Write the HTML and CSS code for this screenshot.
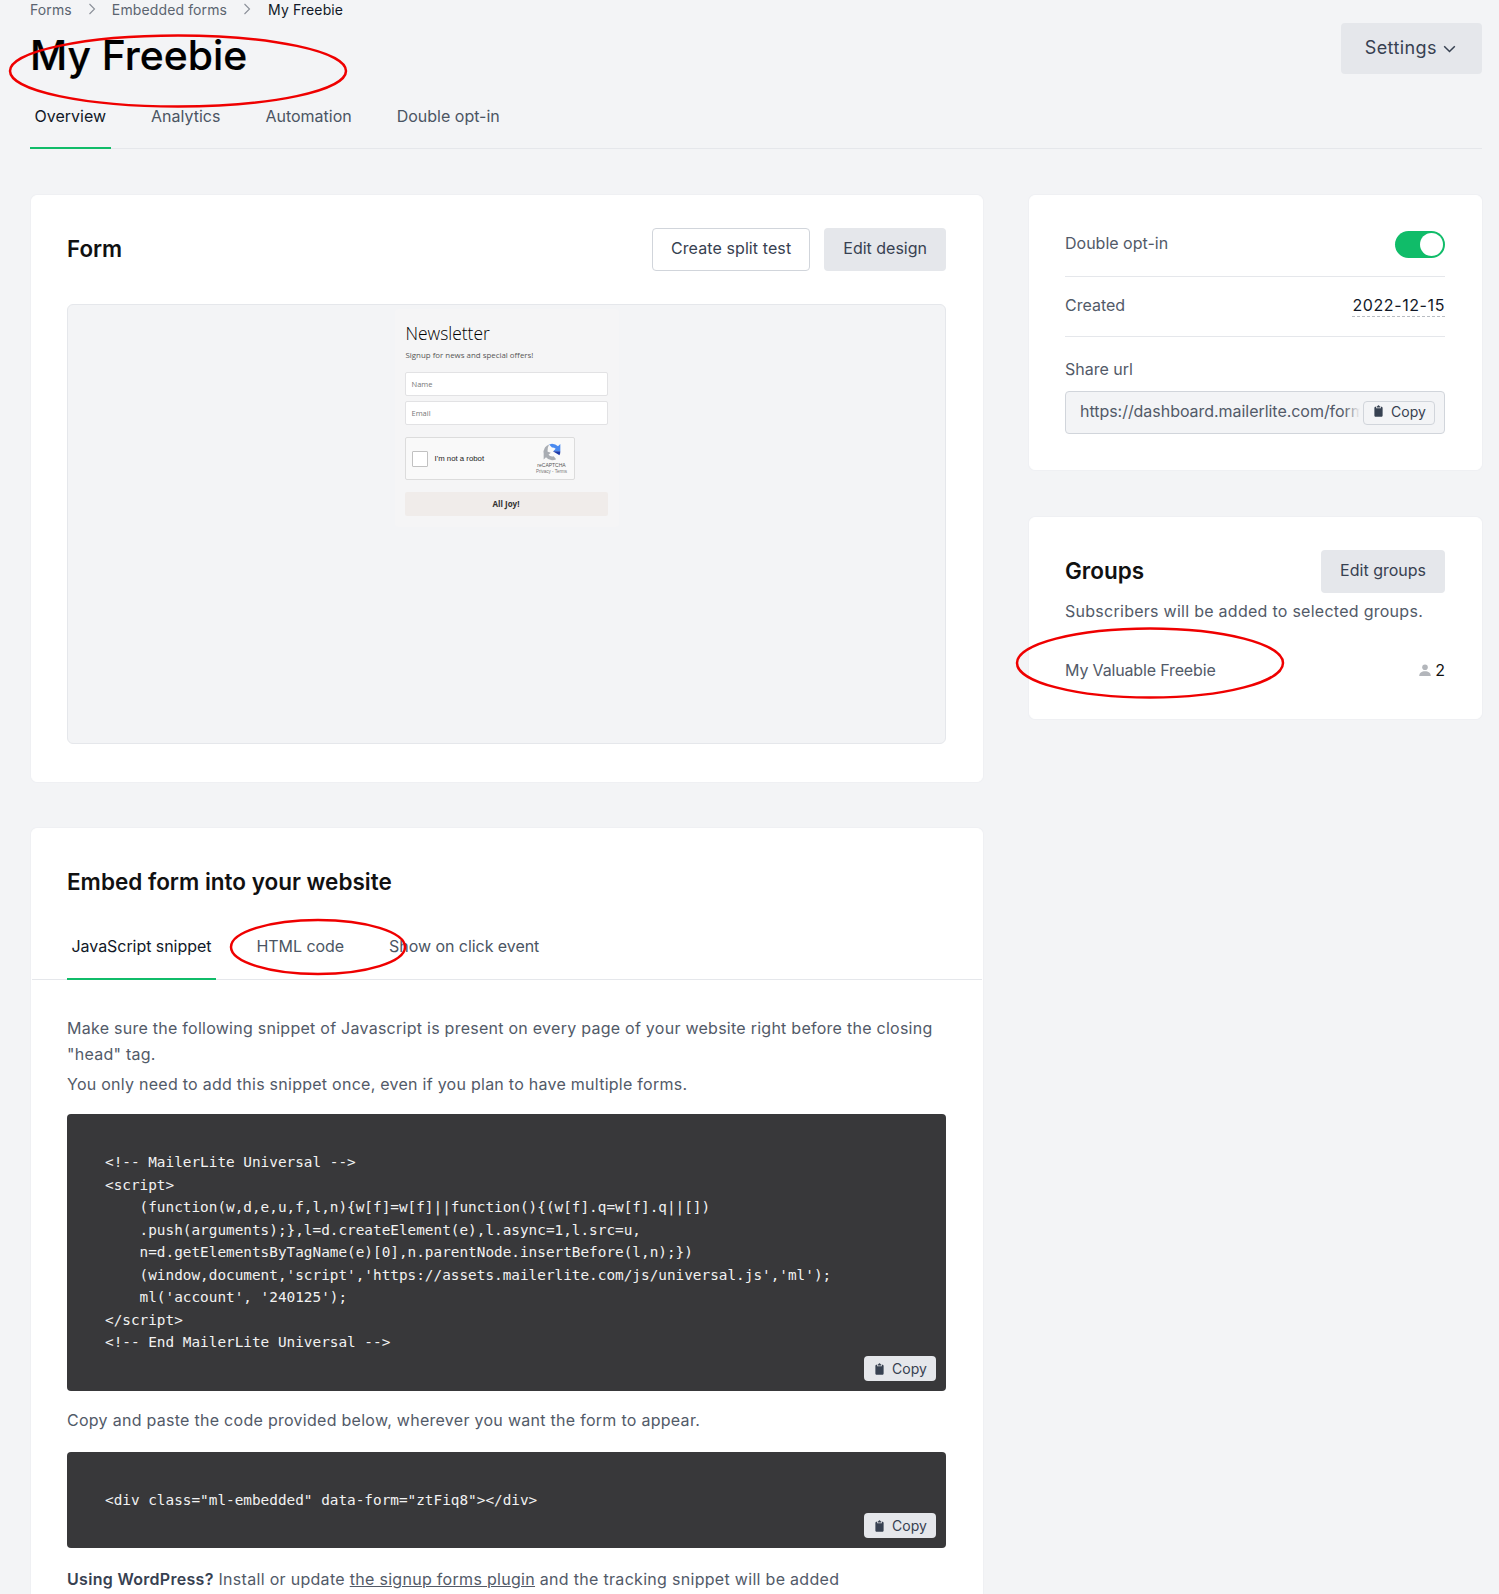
FILE: index.html
```html
<!DOCTYPE html>
<html lang="en">
<head>
<meta charset="utf-8">
<title>My Freebie</title>
<link rel="stylesheet" href="styles.css">
</head>
<body>
<svg width="0" height="0" class="defs">
  <symbol id="clip" viewBox="1 0 10 14"><path d="M4 1.600h.9C5 .8 5.400.3 6 .3s1 .5 1.100 1.300H8V3H4zM2.800 2h.4v1.800h5.600V2h.4c.9 0 1.600.6 1.600 1.500v8.800c0 .9-.7 1.500-1.600 1.500H2.800c-.9 0-1.600-.6-1.600-1.500V3.500C1.200 2.600 1.900 2 2.800 2z" fill="currentColor"/></symbol>
</svg>
<div class="page">
  <nav class="crumbs">
    <span>Forms</span>
    <svg class="sep" viewBox="0 0 8 12"><path d="M1.500 1l5 5-5 5" fill="none" stroke="#8a8f98" stroke-width="1.100"/></svg>
    <span>Embedded forms</span>
    <svg class="sep" viewBox="0 0 8 12"><path d="M1.500 1l5 5-5 5" fill="none" stroke="#8a8f98" stroke-width="1.100"/></svg>
    <span class="cur">My Freebie</span>
  </nav>
  <header class="head">
    <h1>My Freebie</h1>
    <button class="btn gray settings">Settings <svg class="chev" viewBox="0 0 12 8"><path d="M.7 1.200L6 6.500l5.300-5.300" fill="none" stroke="#374151" stroke-width="1.500"/></svg></button>
  </header>
  <div class="tabs main-tabs">
    <a class="tab active">Overview</a>
    <a class="tab">Analytics</a>
    <a class="tab">Automation</a>
    <a class="tab">Double opt-in</a>
  </div>

  <div class="grid">
    <div class="col">
      <section class="card form-card">
        <div class="card-head">
          <h2>Form</h2>
          <div class="actions">
            <button class="btn outline">Create split test</button>
            <button class="btn gray">Edit design</button>
          </div>
        </div>
        <div class="preview">
          <div class="mini">
            <div class="mini-title">Newsletter</div>
            <div class="mini-sub">Signup for news and special offers!</div>
            <div class="mini-input">Name</div>
            <div class="mini-input">Email</div>
            <div class="captcha">
              <span class="cbox"></span>
              <span class="robot">I'm not a robot</span>
              <span class="cap-logo">
                <svg viewBox="0 0 24 24" class="cap-svg">
                  <path d="M12 2a10 10 0 0 1 7.200 3L22 2.300V11h-8.500l2.900-2.900A6 6 0 0 0 12 6.500L8.500 3z" fill="#4a8af0"/>
                  <path d="M22 11a10 10 0 0 1-1 5l-8-5z" fill="#1c3aa9"/>
                  <path d="M8.500 3A10 10 0 0 0 2 12v.5h4.500L7 7z" fill="#a9adb3"/>
                  <path d="M2 10v11l2.800-2.700A10 10 0 0 0 12 22a10 10 0 0 0 5-1.300l-3-3.700a6 6 0 0 1-6.200-1.700L10.500 13z" fill="#a9adb3"/>
                </svg>
                <span class="cap-t">reCAPTCHA</span>
                <span class="cap-p">Privacy - Terms</span>
              </span>
            </div>
            <div class="mini-btn">All Joy!</div>
          </div>
        </div>
      </section>

      <section class="card embed-card">
        <h2 class="embed-title">Embed form into your website</h2>
        <div class="tabs sub-tabs">
          <a class="tab active">JavaScript snippet</a>
          <a class="tab">HTML code</a>
          <a class="tab">Show on click event</a>
        </div>
        <div class="embed-body">
          <p class="p1">Make sure the following snippet of Javascript is present on every page of your website right before the closing "head" tag.</p>
          <p class="p2">You only need to add this snippet once, even if you plan to have multiple forms.</p>
          <div class="code code-a">
<pre>&lt;!-- MailerLite Universal --&gt;
&lt;script&gt;
    (function(w,d,e,u,f,l,n){w[f]=w[f]||function(){(w[f].q=w[f].q||[])
    .push(arguments);},l=d.createElement(e),l.async=1,l.src=u,
    n=d.getElementsByTagName(e)[0],n.parentNode.insertBefore(l,n);})
    (window,document,'script','https://assets.mailerlite.com/js/universal.js','ml');
    ml('account', '240125');
&lt;/script&gt;
&lt;!-- End MailerLite Universal --&gt;</pre>
            <button class="copy on-dark"><svg class="ico"><use href="#clip"/></svg>Copy</button>
          </div>
          <p class="p3">Copy and paste the code provided below, wherever you want the form to appear.</p>
          <div class="code code-b">
<pre>&lt;div class="ml-embedded" data-form="ztFiq8"&gt;&lt;/div&gt;</pre>
            <button class="copy on-dark"><svg class="ico"><use href="#clip"/></svg>Copy</button>
          </div>
          <p class="p4"><b>Using WordPress?</b> Install or update <a class="lnk">the signup forms plugin</a> and the tracking snippet will be added</p>
        </div>
      </section>
    </div>

    <aside class="col">
      <section class="card info-card">
        <div class="row row-toggle">
          <span class="row-label">Double opt-in</span>
          <span class="toggle"><i></i></span>
        </div>
        <div class="row row-created">
          <span class="row-label">Created</span>
          <span class="date">2022-12-15</span>
        </div>
        <div class="share">
          <div class="share-label">Share url</div>
          <div class="share-box">
            <span class="url-wrap"><span class="url">https://dashboard.mailerlite.com/forms</span><span class="fade"></span></span>
            <button class="copy on-light"><svg class="ico"><use href="#clip"/></svg>Copy</button>
          </div>
        </div>
      </section>

      <section class="card groups-card">
        <div class="card-head groups-head">
          <h2>Groups</h2>
          <button class="btn gray">Edit groups</button>
        </div>
        <p class="groups-sub">Subscribers will be added to selected groups.</p>
        <div class="group-row">
          <span class="group-name">My Valuable Freebie</span>
          <span class="count"><svg class="user" viewBox="0 0 12 12"><circle cx="6" cy="3.200" r="2.800" fill="#b3b6bb"/><path d="M.2 12c0-3.200 2.500-4.800 5.800-4.800s5.800 1.600 5.800 4.800z" fill="#b3b6bb"/></svg>2</span>
        </div>
      </section>
    </aside>
  </div>

  <svg class="marks" viewBox="0 0 1499 1594">
    <g fill="none" stroke="#ef0000" stroke-width="2.500">
      <ellipse cx="178" cy="71" rx="168" ry="35.500"/>
      <ellipse cx="1150" cy="663" rx="133" ry="34.500"/>
      <ellipse cx="318" cy="947" rx="87" ry="27"/>
    </g>
  </svg>
</div>
</body>
</html>
```

FILE: styles.css
```css
* { box-sizing: border-box; }
html, body { margin: 0; padding: 0; }
body {
  height: 1594px;
  overflow: hidden;
  background: #f3f4f6;
  font-family: Inter, "Liberation Sans", sans-serif;
  font-size: 16px;
  color: #525a68;
}
.defs { position: absolute; }
.page { position: relative; height: 1594px; padding: 0 17px 0 30px; overflow: hidden; }

.crumbs { display: flex; align-items: center; height: 18px; font-size: 14px; letter-spacing: .12px; color: #5b6470; }
.crumbs .sep { width: 8px; height: 12px; margin: 0 16px; }
.crumbs .cur { color: #111827; margin-left: 1px; }

.head { display: flex; justify-content: space-between; align-items: flex-start; height: 90px; padding-top: 5px; }
h1 { margin: 8px 0 0; font-size: 40.800px; line-height: 48px; font-weight: 500; color: #000; -webkit-text-stroke: .2px #000; }

.btn {
  font-family: inherit; font-size: 16px; border-radius: 4px; border: 1px solid transparent;
  padding: 0 18px 4px; height: 43px; color: #374151; cursor: pointer;
}
.gray { background: #e5e7eb; }
.outline { background: #fff; border-color: #d1d5db; letter-spacing: .1px; }
.settings { height: 51px; width: 141px; font-size: 18px; letter-spacing: .4px; padding: 0 2px 2px 0; }
.chev { width: 13px; height: 8px; margin-left: 1px; vertical-align: 1px; }

.tabs { display: flex; border-bottom: 1px solid #e5e7eb; }
.tab { display: block; color: #4b5563; padding: 0 4.500px; }
.tab.active { color: #111827; border-bottom: 2px solid #10bc69; margin-bottom: -1px; }
.main-tabs { height: 41px; gap: 36px; }
.main-tabs .tab { height: 41px; line-height: 16px; }

.grid { display: grid; grid-template-columns: 952px 453px; column-gap: 46px; margin: 46px 0 0 1px; align-items: start; }
.col { display: flex; flex-direction: column; }
.card { background: #fff; border-radius: 6px; border: 1px solid #fff; box-shadow: 0 0 0 1px #eff0f3; }

h2 { margin: 0; padding-bottom: 1px; font-size: 22.300px; line-height: 30px; font-weight: 600; color: #111; }
.form-card { height: 587px; padding: 32px 36px 32px 35px; margin-bottom: 46px; }
.card-head { display: flex; justify-content: space-between; align-items: center; }
.actions { display: flex; gap: 14px; }
.preview { margin-top: 33px; height: 440px; background: #f3f4f6; border: 1px solid #e5e7eb; border-radius: 6px; display: flex; justify-content: center; }

.mini { width: 224px; height: 218px; margin-top: 4px; padding: 14px 11px 14px 10px; background: #f5f5f6; font-family: "Open Sans", sans-serif; border-radius: 3px; }
.mini-title { font-size: 17.400px; line-height: 20px; color: #000; font-weight: 300; margin-left: 1px; }
.mini-sub { font-size: 7.900px; line-height: 12px; margin: 6px 0 0 1px; color: #555; }
.mini-input { height: 24px; margin-top: 5px; padding-left: 6px; background: #fff; border: 1px solid #e2e2e4; border-radius: 2px; font-size: 7.500px; line-height: 22px; color: #777; }
.mini-sub + .mini-input { margin-top: 11px; }
.captcha { display: flex; align-items: center; position: relative; width: 170px; height: 43px; margin-top: 12px; background: #f9f9f9; border: 1px solid #dcdcdc; border-radius: 2px; }
.cbox { width: 16px; height: 16px; margin-left: 6px; background: #fff; border: 1px solid #c1c1c1; border-radius: 1px; }
.robot { margin-left: 7px; font-size: 7.800px; font-family: "Liberation Sans", sans-serif; color: #222; }
.cap-logo { position: absolute; right: 5px; top: 4px; width: 34px; display: flex; flex-direction: column; align-items: center; font-family: "Liberation Sans", sans-serif; color: #555; }
.cap-svg { width: 20px; height: 20px; }
.cap-t { font-size: 5px; line-height: 7px; }
.cap-p { font-size: 4.500px; line-height: 6px; white-space: nowrap; color: #777; }
.mini-btn { height: 24px; margin-top: 12px; background: #f0ecea; border-radius: 2px; text-align: center; font-size: 8px; line-height: 23px; font-weight: 700; color: #333; }

.embed-card { height: 800px; }
h2.embed-title { margin: 37px 36px 0 35px; padding: 0; line-height: 32px; font-size: 22.500px; }
.sub-tabs { margin-top: 31px; height: 51px; padding-left: 35px; gap: 36px; }
.sub-tabs .tab { height: 51px; line-height: 35px; letter-spacing: -.05px; }
.embed-body { padding: 0 36px 0 35px; letter-spacing: .26px; }
.embed-body p { margin: 0; line-height: 26px; }
.p1 { padding-top: 35px; }
.embed-body .p2 { margin-top: 4px; }
.embed-body .p3 { margin-top: 16px; letter-spacing: .28px; }
.embed-body .p4 { margin-top: 18px; letter-spacing: .3px; }
.p4 b { font-weight: 600; color: #374151; }
.lnk { text-decoration: underline; }

.code { position: relative; background: #38383a; border-radius: 4px; color: #f2f2f2; padding: 37px 37px 37px 38px; }
.code pre { margin: 0; font-family: "DejaVu Sans Mono", monospace; font-size: 14.370px; line-height: 22.500px; letter-spacing: 0; }
.code-a { height: 277px; margin-top: 17px; }
.code-b { height: 96px; margin-top: 19px; }

.copy { display: inline-flex; align-items: center; justify-content: center; font-family: inherit; font-size: 14px; letter-spacing: 0; color: #374151; border-radius: 4px; cursor: pointer; padding: 0 0 0 2px; }
.ico { width: 9px; height: 12px; margin-right: 8px; color: #374151; }
.on-dark { position: absolute; right: 10px; bottom: 10px; width: 72px; height: 25px; background: #e5e7eb; border: 0; }
.on-light { width: 72px; height: 24px; background: #f3f4f6; border: 1px solid #d1d5db; flex: none; padding-bottom: 3px; }

.info-card { height: 275px; padding: 0 36px 0 35px; margin-bottom: 47px; }
.row { display: flex; justify-content: space-between; align-items: center; border-bottom: 1px solid #e5e7eb; }
.row-label { padding-bottom: 2px; }
.row-toggle { height: 81px; padding-top: 16px; }
.row-created { height: 60px; padding-bottom: 2px; }
.toggle { display: block; width: 50px; height: 27px; background: #10bc69; border-radius: 14px; position: relative; }
.toggle i { position: absolute; right: 2px; top: 2px; width: 23px; height: 23px; background: #fff; border-radius: 50%; }
.date { color: #111827; border-bottom: 1px dashed #b8bcc2; line-height: 22px; letter-spacing: .6px; }
.share-label { margin-top: 20px; line-height: 24px; }
.share-box { display: flex; align-items: center; gap: 3px; margin-top: 10px; height: 43px; background: #f3f4f6; border: 1px solid #d1d5db; border-radius: 4px; padding: 0 9px 0 14px; }
.url-wrap { position: relative; flex: 1; min-width: 0; overflow: hidden; white-space: nowrap; padding-bottom: 3px; }
.url { letter-spacing: -.04px; }
.fade { position: absolute; right: 0; top: 0; bottom: 0; width: 16px; background: linear-gradient(to right, rgba(243,244,246,0), #f3f4f6); }

.groups-card { height: 202px; padding: 32px 36px 0 35px; }
.groups-head h2 { font-size: 22.500px; }
.groups-sub { margin: 5px 0 0; line-height: 26px; letter-spacing: .27px; }
.group-row { display: flex; justify-content: space-between; align-items: center; margin-top: 34px; line-height: 24px; }
.group-name { letter-spacing: -.15px; }
.count { display: flex; align-items: center; color: #111; }
.user { width: 12px; height: 12px; margin-right: 4px; }

.marks { position: absolute; left: 0; top: 0; width: 1499px; height: 1594px; pointer-events: none; }
```
